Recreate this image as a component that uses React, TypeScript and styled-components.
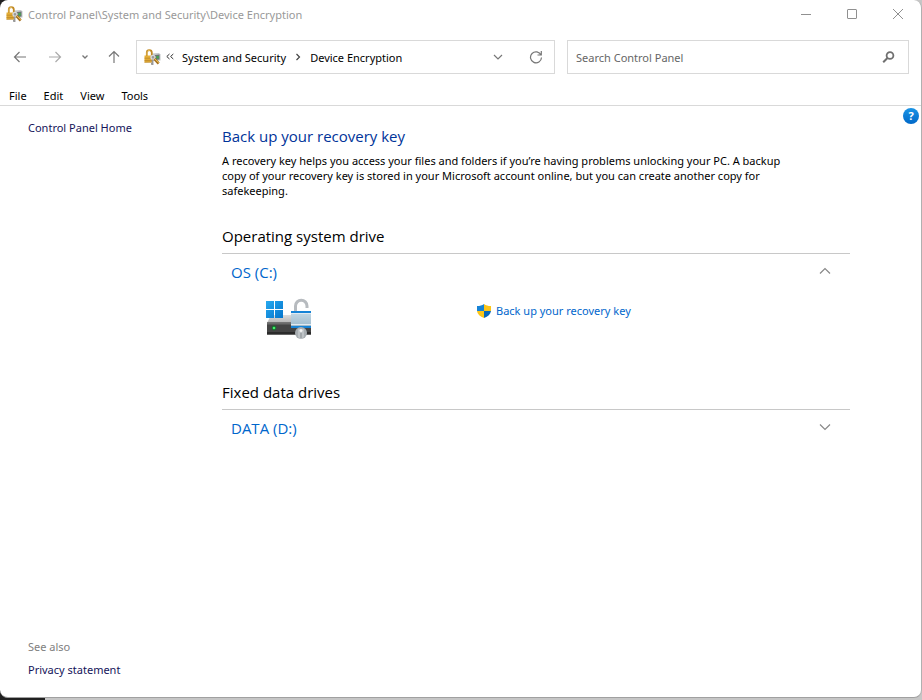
import React from "react";
import styled, { createGlobalStyle } from "styled-components";

const GlobalStyle = createGlobalStyle`
  * { box-sizing: border-box; }
  body {
    margin: 0;
    background: linear-gradient(to right, #202020 45px, #c6c6c6 45px);
    font-family: "Noto Sans", "Open Sans", sans-serif;
    font-size: 11px;
    line-height: 15px;
    color: #000;
  }
  button, input { font: inherit; color: inherit; }
  h1, h2, h3, p { margin: 0; font-weight: 400; }
`;

const Desktop = styled.div`
  display: flex;
  min-height: 100vh;
  padding-bottom: 2px;
`;

const Window = styled.div`
  flex: 1;
  display: flex;
  flex-direction: column;
  min-width: 0;
  background: #fff;
  border-right: 1px solid #b0b0b0;
  border-bottom: 1px solid #a0a0a0;
  border-radius: 8px;
  overflow: hidden;
`;

const TitleBar = styled.header`
  display: flex;
  align-items: center;
  height: 28px;
  padding-left: 6px;
  color: #999;
`;

const Title = styled.h1`
  flex: 1;
  padding-left: 5px;
  font-size: 11px;
  white-space: nowrap;
`;

const IconButton = styled.button<{ $width: number }>`
  display: flex;
  flex: none;
  align-items: center;
  justify-content: center;
  width: ${(p) => p.$width}px;
  height: 28px;
  padding: 0;
  border: 0;
  background: none;
  color: #777;
`;

const WindowButton = styled(IconButton)`
  color: #909090;
`;

const NavRow = styled.div`
  display: flex;
  align-items: center;
  padding: 12px 12px 12px 4px;
`;

const AddressBar = styled.nav`
  display: flex;
  flex: 410;
  align-items: center;
  height: 34px;
  margin-left: 5px;
  padding-left: 7px;
  border: 1px solid #d9d9d9;
  white-space: nowrap;
`;

const Crumb = styled.button`
  padding: 0 9px;
  border: 0;
  background: none;
`;

const FirstCrumb = styled(Crumb)`
  padding-left: 3px;
`;

const Spacer = styled.div`
  flex: 1;
`;

const SearchBox = styled.label`
  display: flex;
  flex: 319;
  align-items: center;
  min-width: 0;
  height: 34px;
  margin-left: 12px;
  padding: 0 13px 0 8px;
  border: 1px solid #d9d9d9;
`;

const SearchInput = styled.input`
  flex: 1;
  min-width: 0;
  padding: 0;
  border: 0;
  outline: 0;
  background: none;
  &::placeholder { color: #666; opacity: 1; }
`;

const MenuBar = styled.div`
  display: flex;
  gap: 17px;
  height: 20px;
  padding-left: 9px;
  border-bottom: 1px solid #d9d9d9;
`;

const MenuItem = styled.button`
  display: flex;
  align-items: center;
  padding: 0;
  border: 0;
  background: none;
`;

const Body = styled.div`
  flex: 1;
  display: flex;
`;

const Sidebar = styled.aside`
  display: flex;
  flex: none;
  flex-direction: column;
  justify-content: space-between;
  width: 222px;
  padding: 14px 0 20px 28px;
`;

const SideLink = styled.a`
  color: #14145a;
  text-decoration: none;
`;

const SeeAlso = styled.div`
  display: flex;
  flex-direction: column;
  gap: 8px;
`;

const SeeAlsoLabel = styled.span`
  color: #808080;
`;

const Main = styled.main`
  flex: 1;
  min-width: 0;
  padding-top: 19px;
`;

const PageHeading = styled.h2`
  font-family: "Open Sans", "Noto Sans", sans-serif;
  font-size: 15px;
  line-height: 22px;
  color: #003399;
`;

const Intro = styled.p`
  max-width: 580px;
  padding-top: 6px;
`;

const DriveSection = styled.section<{ $gap: number }>`
  padding-top: ${(p) => p.$gap}px;
`;

const SectionHeading = styled.h2`
  padding-bottom: 6px;
  border-bottom: 1px solid #c8c8c8;
  font-family: "Open Sans", "Noto Sans", sans-serif;
  font-size: 15px;
  line-height: 22px;
`;

const DriveToggle = styled.button`
  display: flex;
  align-items: center;
  justify-content: space-between;
  width: 100%;
  padding: 7px 18px 8px 9px;
  border: 0;
  background: none;
  color: #0066cc;
  font-family: "Open Sans", "Noto Sans", sans-serif;
  font-size: 15px;
  line-height: 22px;
`;

const DriveDetails = styled.div`
  display: grid;
  grid-template-columns: 255px 1fr;
  padding-top: 7px;
`;

const DriveIconCell = styled.div`
  padding-left: 43px;
`;

const ActionLink = styled.a`
  display: flex;
  align-items: center;
  gap: 5px;
  align-self: start;
  padding-top: 5px;
  color: #0066cc;
  text-decoration: none;
`;

const HelpColumn = styled.div`
  flex: none;
  width: 71px;
  padding: 2px 2px 0 0;
  display: flex;
  justify-content: flex-end;
  align-items: flex-start;
`;

const HelpButton = styled.button`
  width: 16px;
  height: 16px;
  padding: 0;
  border: 0;
  border-radius: 50%;
  background: linear-gradient(#1a94e6, #0068c8);
  color: #fff;
  font-size: 11px;
  font-weight: 700;
  line-height: 16px;
`;

const LineSvg = styled.svg`
  display: block;
  flex: none;
  fill: none;
  stroke: currentColor;
`;

const ArtSvg = styled.svg`
  display: block;
  flex: none;
`;

function EncryptionIcon() {
  return (
    <ArtSvg width="17" height="17" viewBox="0 0 17 17" aria-hidden="true">
      <path d="M8 4.500 15 4l1.500 1.500v6L9 12z" fill="#c3c7c9" />
      <path d="m9.500 6.200 6-.6v5L10 11z" fill="#6b7474" />
      <path d="M12.500 7h2.200v2.500h-2.200z" fill="#42aa49" />
      <path d="M2.800 7V3.600a2.500 2.500 0 0 1 5 0V7" fill="none" stroke="#c18a25" strokeWidth="1.800" />
      <path d="M3 6V3.600a2.400 2.400 0 0 1 3-2.300" fill="none" stroke="#f0ce74" strokeWidth=".7" />
      <path d="M.5 6.500H9V13l-8.500.5z" fill="#e5ae35" />
      <path d="M.5 9.200H9M.5 11.400H9M.5 13.200H9" stroke="#b9852a" strokeWidth=".8" />
      <circle cx="9" cy="8.300" r="2" fill="#999" stroke="#dadada" strokeWidth="1.300" />
      <path d="M8.600 10.500v5.500M8.600 14.800h-1.600" stroke="#999" strokeWidth="1.700" />
      <path d="m10.500 10 4.200 4.500" stroke="#a87323" strokeWidth="2.600" />
      <path d="m10.800 9.800 4 4" stroke="#e8bc4c" />
    </ArtSvg>
  );
}

function Chevron({ dir }: { dir: "up" | "down" }) {
  return (
    <LineSvg width="14" height="12" viewBox="0 0 14 12" aria-hidden="true" color="#888">
      <path d={dir === "up" ? "M2 7.500l5-5 5 5" : "M2 2.500l5 5 5-5"} strokeWidth="1.200" />
    </LineSvg>
  );
}

function DriveIcon() {
  return (
    <ArtSvg width="48" height="42" viewBox="0 0 48 42" role="img" aria-label="Unlocked system drive">
      <defs>
        <linearGradient id="tile" x2="1" y2="1">
          <stop stopColor="#27a9ef" />
          <stop offset="1" stopColor="#0475cc" />
        </linearGradient>
        <linearGradient id="lid" y2="1" x2="0">
          <stop stopColor="#dcdcdc" />
          <stop offset="1" stopColor="#b4b4b4" />
        </linearGradient>
        <linearGradient id="lock" y2="1" x2="0">
          <stop stopColor="#c8dce8" />
          <stop offset="1" stopColor="#9ab6c8" />
        </linearGradient>
      </defs>
      <path d="M6 17h36l4 8H2z" fill="url(#lid)" />
      <path d="M2 24.500h44v12H2z" fill="#444" />
      <path d="M2 24.500h44v2H2z" fill="#6a6a6a" />
      <path d="M2 34h44v2.500H2z" fill="#2b2b2b" />
      <circle cx="9" cy="30" r="2.400" fill="#176d2e" />
      <circle cx="9" cy="30" r="1.300" fill="#42ef6a" />
      <path d="M1 3h8v8H1zm9 0h8v8h-8zM1 12h8v8H1zm9 0h8v8h-8z" fill="url(#tile)" />
      <path d="M30.500 13.500V8a5.700 5.700 0 0 1 11.500 0v2" fill="none" stroke="#b7bbbf" strokeWidth="3" />
      <path d="M26 13h20v17H26z" fill="url(#lock)" />
      <path d="M26 13h20v2H26zm0 15h20v2H26z" fill="#1683d6" />
      <path d="M26 15h20v1H26zm0 11h20v1H26z" fill="#e0eaf1" />
      <circle cx="36" cy="35" r="6" fill="#a7adb1" />
      <path d="M33 31h6v8l-3 2-3-2z" fill="#bec3c6" />
      <path d="M36 35v5" stroke="#858b8f" />
      <circle cx="36" cy="32.500" r="1.500" fill="#f4f4f4" />
    </ArtSvg>
  );
}

function ShieldIcon() {
  return (
    <ArtSvg width="14" height="14" viewBox="0 0 14 14" aria-hidden="true">
      <path d="M7 0C5 1.500 3 2 0 2v5h7z" fill="#1683d6" />
      <path d="M7 0c2 1.500 4 2 7 2v5H7z" fill="#fcc518" />
      <path d="M0 7h7v7C3 12.500 .5 10.500 0 7z" fill="#fcc518" />
      <path d="M14 7H7v7c4-1.500 6.500-3.500 7-7z" fill="#0868bb" />
    </ArtSvg>
  );
}

export default function App() {
  return (
    <Desktop>
      <GlobalStyle />
      <Window>
        <TitleBar>
          <EncryptionIcon />
          <Title>Control Panel\System and Security\Device Encryption</Title>
          <WindowButton $width={46} aria-label="Minimize">
            <LineSvg width="10" height="10" viewBox="0 0 10 10"><path d="M0 5.500h10" /></LineSvg>
          </WindowButton>
          <WindowButton $width={46} aria-label="Maximize">
            <LineSvg width="10" height="10" viewBox="0 0 10 10"><rect x=".5" y=".5" width="9" height="9" rx=".5" /></LineSvg>
          </WindowButton>
          <WindowButton $width={46} aria-label="Close">
            <LineSvg width="10" height="10" viewBox="0 0 10 10"><path d="m0 0 10 10M10 0 0 10" /></LineSvg>
          </WindowButton>
        </TitleBar>

        <NavRow>
          <IconButton $width={32} aria-label="Back">
            <LineSvg width="14" height="12" viewBox="0 0 14 12"><path d="M13 6H1.500M6.500 1l-5 5 5 5" strokeWidth="1.200" /></LineSvg>
          </IconButton>
          <IconButton $width={38} aria-label="Forward">
            <LineSvg width="14" height="12" viewBox="0 0 14 12" color="#aaa"><path d="M1 6h11.500M7.500 1l5 5-5 5" strokeWidth="1.200" /></LineSvg>
          </IconButton>
          <IconButton $width={22} aria-label="Recent locations">
            <LineSvg width="8" height="6" viewBox="0 0 8 6"><path d="m1.500 1.500 2.500 2.500 2.500-2.500" strokeWidth="1.300" /></LineSvg>
          </IconButton>
          <IconButton $width={35} aria-label="Up">
            <LineSvg width="12" height="14" viewBox="0 0 12 14"><path d="M6 13V1.500M1 6.500l5-5 5 5" strokeWidth="1.200" /></LineSvg>
          </IconButton>
          <AddressBar aria-label="Address">
            <EncryptionIcon />
            <IconButton $width={18} aria-label="Earlier locations">
              <LineSvg width="8" height="8" viewBox="0 0 8 8" color="#333"><path d="M3.500 1 .8 3.500 3.500 6M7.300 1 4.600 3.500 7.300 6" /></LineSvg>
            </IconButton>
            <FirstCrumb>System and Security</FirstCrumb>
            <LineSvg width="6" height="8" viewBox="0 0 6 8" color="#444" aria-hidden="true"><path d="M1.500 1l3 3-3 3" strokeWidth="1.200" /></LineSvg>
            <Crumb>Device Encryption</Crumb>
            <Spacer />
            <IconButton $width={38} aria-label="Previous locations">
              <LineSvg width="10" height="6" viewBox="0 0 10 6"><path d="m1 1 4 4 4-4" strokeWidth="1.200" /></LineSvg>
            </IconButton>
            <IconButton $width={37} aria-label="Refresh">
              <LineSvg width="14" height="14" viewBox="0 0 14 14"><path d="M12 5A5.500 5.500 0 1 0 12.500 7.500M12.300 1v4H8.500" strokeWidth="1.200" /></LineSvg>
            </IconButton>
          </AddressBar>
          <SearchBox>
            <SearchInput type="text" placeholder="Search Control Panel" aria-label="Search Control Panel" />
            <LineSvg width="13" height="12" viewBox="0 0 13 12" color="#707070" aria-hidden="true">
              <circle cx="8" cy="4.500" r="3.400" strokeWidth="1.800" />
              <path d="M5.500 7 1.200 11.200" strokeWidth="2" />
            </LineSvg>
          </SearchBox>
        </NavRow>

        <MenuBar>
          <MenuItem>File</MenuItem>
          <MenuItem>Edit</MenuItem>
          <MenuItem>View</MenuItem>
          <MenuItem>Tools</MenuItem>
        </MenuBar>

        <Body>
          <Sidebar>
            <SideLink href="#home">Control Panel Home</SideLink>
            <SeeAlso>
              <SeeAlsoLabel>See also</SeeAlsoLabel>
              <SideLink href="#privacy">Privacy statement</SideLink>
            </SeeAlso>
          </Sidebar>
          <Main>
            <PageHeading>Back up your recovery key</PageHeading>
            <Intro>
              A recovery key helps you access your files and folders if you’re having problems unlocking your PC. A
              backup copy of your recovery key is stored in your Microsoft account online, but you can create another
              copy for safekeeping.
            </Intro>
            <DriveSection $gap={27}>
              <SectionHeading>Operating system drive</SectionHeading>
              <DriveToggle aria-expanded="true">
                OS (C:)
                <Chevron dir="up" />
              </DriveToggle>
              <DriveDetails>
                <DriveIconCell><DriveIcon /></DriveIconCell>
                <ActionLink href="#backup">
                  <ShieldIcon />
                  Back up your recovery key
                </ActionLink>
              </DriveDetails>
            </DriveSection>
            <DriveSection $gap={41}>
              <SectionHeading>Fixed data drives</SectionHeading>
              <DriveToggle aria-expanded="false">
                DATA (D:)
                <Chevron dir="down" />
              </DriveToggle>
            </DriveSection>
          </Main>
          <HelpColumn>
            <HelpButton aria-label="Help">?</HelpButton>
          </HelpColumn>
        </Body>
      </Window>
    </Desktop>
  );
}
